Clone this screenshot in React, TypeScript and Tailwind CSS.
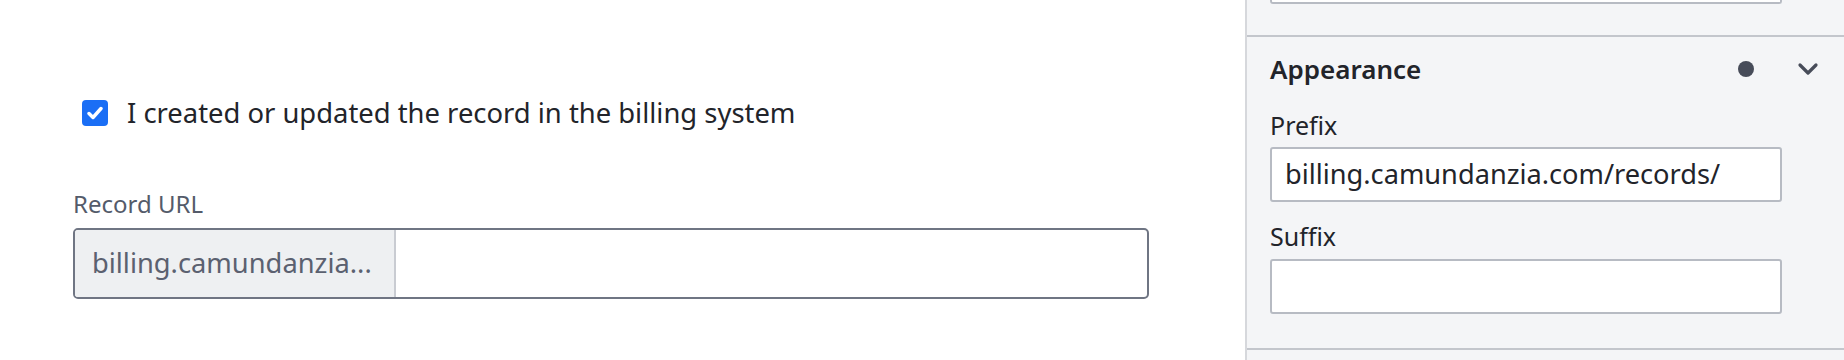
import { ChevronDown } from "lucide-react";

const font = { fontFamily: '"Noto Sans", "Open Sans", sans-serif' };

export default function App() {
  return (
    <div className="flex h-[360px] w-full overflow-hidden bg-white" style={font}>
      {/* canvas */}
      <div className="w-[1245px] shrink-0 bg-white pl-[73px] pt-[100px]">
        <label className="ml-[9px] flex h-[26px] items-center gap-[19px]">
          <span className="flex h-[26px] w-[26px] items-center justify-center rounded-[4px] bg-[#1a6ef5]">
            <svg width="16" height="14" viewBox="0 0 16 14" fill="none">
              <path d="M2 7.5l4 4L14 2.5" stroke="white" strokeWidth="3.4" strokeLinecap="round" strokeLinejoin="round" />
            </svg>
          </span>
          <span className="text-[27.4px] leading-[34px] text-[#22242a]">
            I created or updated the record in the billing system
          </span>
        </label>

        <div className="mt-[63px] text-[24px] leading-[30px] text-[#545b6a]">Record URL</div>
        <div className="mt-[9px] flex h-[71px] w-[1076px] overflow-hidden rounded-[5px] border-2 border-[#6f7583] bg-white">
          <div className="flex w-[321px] shrink-0 items-center border-r-2 border-[#c9ccd2] bg-[#eef0f2] pl-[17px] text-[27.3px] text-[#5b6170]">
            billing.camundanzia...
          </div>
          <div className="flex-1" />
        </div>
      </div>

      {/* properties panel */}
      <div className="flex-1 border-l-2 border-[#d6d8dc] bg-[#f4f5f7]">
        <div className="h-[35px] pl-[23px]">
          <div className="h-[4px] w-[512px] rounded-b-[3px] border-2 border-t-0 border-[#b7bbc3] bg-white" />
        </div>
        <div className="border-y-2 border-[#c3c6cc] pb-[34px] pl-[23px] pt-[16px]">
          <div className="flex h-[32px] items-center pr-[20px]">
            <span className="text-[26px] font-semibold leading-[32px] text-[#22242a]">Appearance</span>
            <span className="ml-auto h-[16px] w-[16px] rounded-full bg-[#474c59]" />
            <ChevronDown className="ml-[38px] h-[32px] w-[32px] text-[#474c59]" strokeWidth={2.4} />
          </div>

          <div className="mt-[24px] text-[25px] leading-[32px] text-[#22242a]">Prefix</div>
          <div className="mt-[6px] flex h-[55px] w-[512px] items-center rounded-[3px] border-2 border-[#b7bbc3] bg-white pl-[13px] text-[27.2px] text-[#22242a]">
            billing.camundanzia.com/records/
          </div>

          <div className="mt-[18px] text-[25px] leading-[32px] text-[#22242a]">Suffix</div>
          <div className="mt-[7px] h-[55px] w-[512px] rounded-[3px] border-2 border-[#b7bbc3] bg-white" />
        </div>
      </div>
    </div>
  );
}
